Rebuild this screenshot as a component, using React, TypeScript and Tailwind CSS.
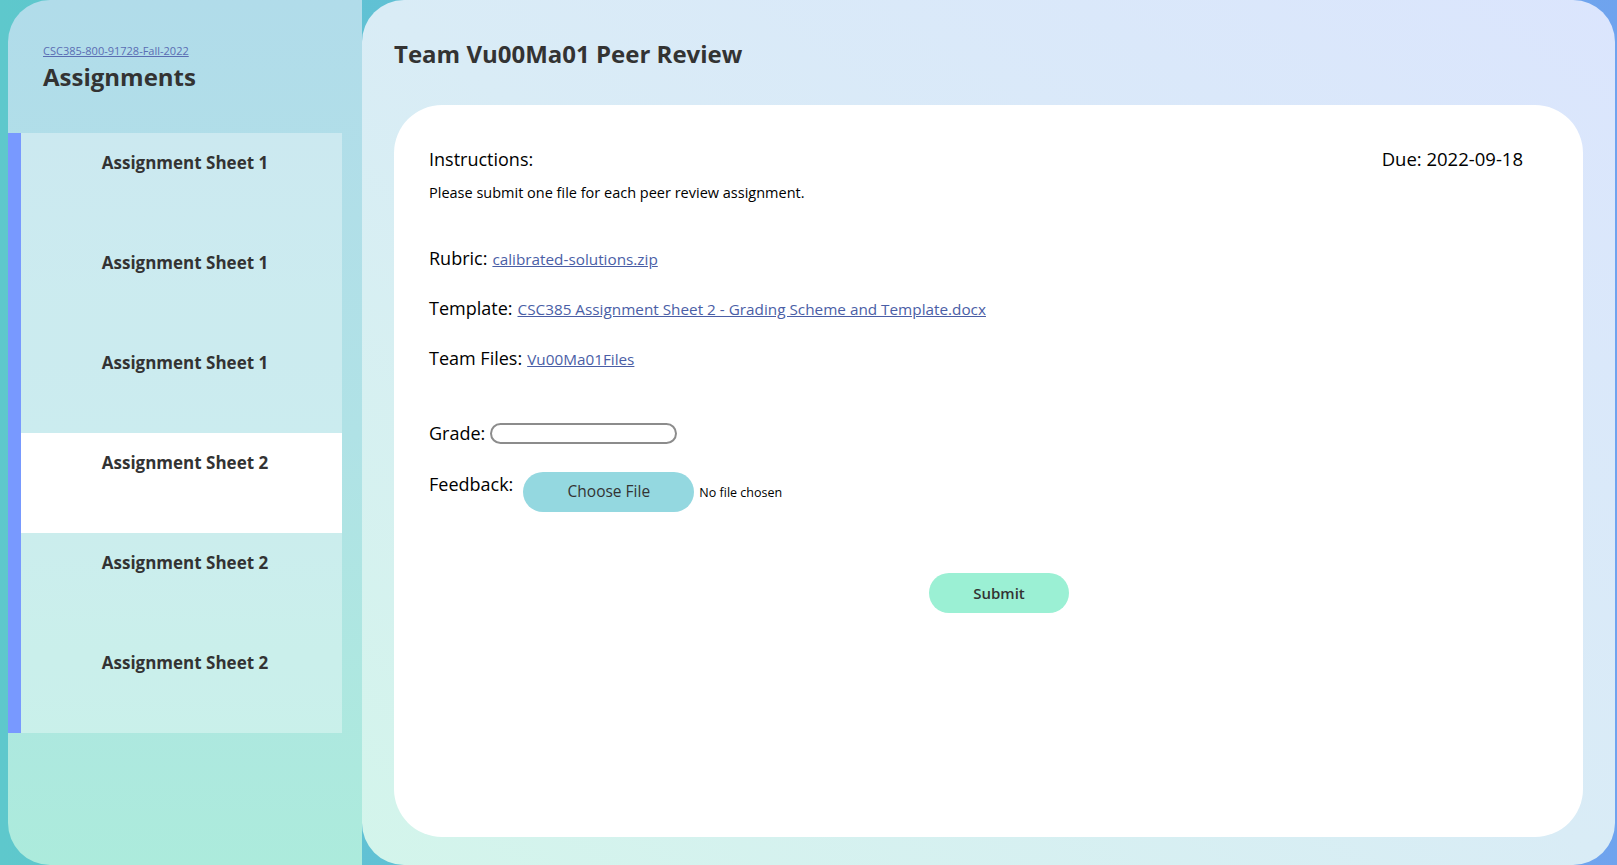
import React from 'react'

const sheets = [
  { title: 'Assignment Sheet 1', active: false },
  { title: 'Assignment Sheet 1', active: false },
  { title: 'Assignment Sheet 1', active: false },
  { title: 'Assignment Sheet 2', active: true },
  { title: 'Assignment Sheet 2', active: false },
  { title: 'Assignment Sheet 2', active: false },
]

function Sidebar() {
  return (
    <aside className="w-[354px] h-full shrink-0 rounded-l-[42px] bg-gradient-to-b from-[#b1dcea] via-[#b0e2e6] to-[#acebdc] flex flex-col">
      <div className="pl-[35px] pt-[44px] h-[133px]">
        <a href="#" className="block text-[11px] leading-[14px] text-[#5a6db3] underline">
          CSC385-800-91728-Fall-2022
        </a>
        <h2 className="mt-[4px] text-[24px] leading-[30px] font-bold text-[#333333]">Assignments</h2>
      </div>
      <nav className="w-[334px] border-l-[13px] border-[#7899ff]">
        {sheets.map((s, i) => (
          <div
            key={i}
            className={`h-[100px] pt-[18px] pl-[7px] text-center text-[17px] leading-[24px] font-bold text-[#333333] ${
              s.active ? 'bg-white' : 'bg-white/35'
            }`}
          >
            {s.title}
          </div>
        ))}
      </nav>
    </aside>
  )
}

function Field({ label, children }: { label: string; children: React.ReactNode }) {
  return (
    <div className="flex items-baseline gap-[5px] leading-[24px]">
      <span className="text-[18px] text-black">{label}</span>
      {children}
    </div>
  )
}

export default function App() {
  return (
    <div
      className="w-full h-[865px] flex pl-[8px] pr-[2px] bg-gradient-to-r from-[#5ec8cc] via-[#63b9dd] to-[#6fa3ee] overflow-hidden"
      style={{ fontFamily: '"Open Sans", "Noto Sans", sans-serif' }}
    >
      <Sidebar />
      <main className="flex-1 h-full rounded-[42px] bg-gradient-to-tr from-[#d3f5eb] via-[#d9ecf6] to-[#dbe5fd] pl-[32px] pr-[32px] pt-[38px] pb-[28px] flex flex-col">
        <h1 className="text-[24px] leading-[32px] font-bold text-[#333333]">Team Vu00Ma01 Peer Review</h1>
        <section className="mt-[35px] flex-1 bg-white rounded-[48px] pl-[35px] pr-[60px] pt-[42px]">
          <div className="flex justify-between items-baseline leading-[24px]">
            <span className="text-[18px] text-black">Instructions:</span>
            <span className="text-[18.5px] text-black">Due: 2022-09-18</span>
          </div>
          <p className="mt-[12px] text-[14.5px] leading-[20px] text-black">
            Please submit one file for each peer review assignment.
          </p>

          <div className="mt-[43px] flex flex-col gap-[25px]">
            <Field label="Rubric:">
              <a href="#" className="text-[15.3px] text-[#4a5ea6] underline">calibrated-solutions.zip</a>
            </Field>
            <Field label="Template:">
              <a href="#" className="text-[15.3px] text-[#4a5ea6] underline">
                CSC385 Assignment Sheet 2 - Grading Scheme and Template.docx
              </a>
            </Field>
            <Field label="Team Files:">
              <a href="#" className="text-[15.3px] text-[#4a5ea6] underline">Vu00Ma01Files</a>
            </Field>
          </div>

          <div className="mt-[50px] h-[24px] flex items-center gap-[5px]">
            <span className="text-[18px] leading-[24px] text-black">Grade:</span>
            <input
              type="text"
              className="w-[187px] h-[21px] rounded-full border-2 border-[#8c8c8c] bg-white px-2 text-[13px] outline-none"
            />
          </div>

          <div className="mt-[27px] flex items-start">
            <span className="text-[18px] leading-[24px] text-black">Feedback:</span>
            <button className="ml-[10px] w-[171px] h-[40px] rounded-full bg-[#94d8e0] text-[15.5px] font-medium text-[#333333]">
              Choose File
            </button>
            <span className="ml-[5px] mt-[13px] text-[12.5px] leading-[16px] text-black">No file chosen</span>
          </div>

          <div className="mt-[61px] flex justify-center pl-[46px]">
            <button className="w-[140px] h-[40px] rounded-full bg-[#9bf0d4] text-[15px] font-semibold text-[#333333]">
              Submit
            </button>
          </div>
        </section>
      </main>
    </div>
  )
}
